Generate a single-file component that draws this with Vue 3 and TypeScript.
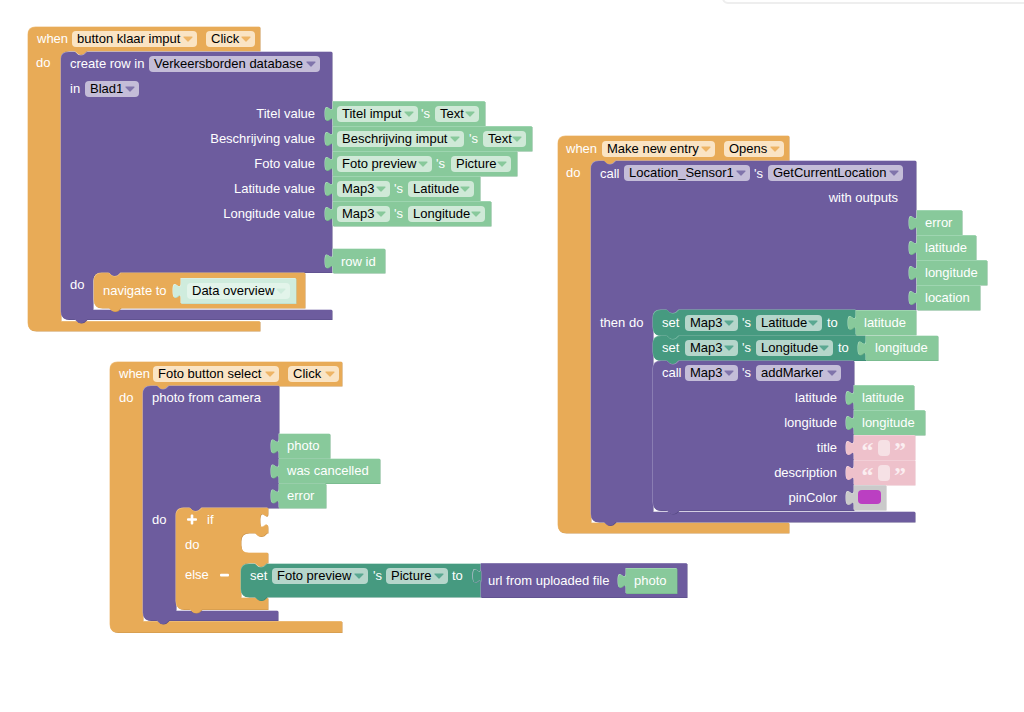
<script setup lang="ts">
type Shape = { d: string; c: 'o' | 'p' | 'g' | 't' | 'k' | 'a' | 'x' | 'u' }
type Label = { x: number; y: number; t: string; right?: boolean; big?: boolean }
type Pill = { x: number; y: number; w: number; t: string; c: string }
type Rect = { x: number; y: number; w: number; h: number; c: string }

const dent = (x: number) => `H${x} l3,2.8 q3,1.6 6,0 l3,-2.8`
const tab = (x: number) => `H${x + 12} l-3,2.8 q-3,1.6 -6,0 l-3,-2.8`
const val = (x: number, y: number, r: number, b: number, c: Shape['c']): Shape => ({
  c,
  d: `M${x},${y} H${r} V${b} H${x} V${y + 20} c0,-10 -8,8 -8,-7.5 s8,2.5 8,-7.5 Z`
})

const shapes: Shape[] = [
  // block 1
  { c: 'o', d: `M28,35 Q28,27 36,27 H260 V51 ${tab(75)} H69 Q61,51 61,59 V321.5 H260 V331 H36 Q28,331 28,323 Z` },
  { c: 'p', d: `M61,59 Q61,52 69,52 ${dent(75)} H332 V272.5 ${tab(109)} H101 Q93,272.5 93,280.5 V310 H332 V319.5 ${tab(75)} H69 Q61,319.5 61,311.5 Z` },
  { c: 'o', d: `M94,281 Q94,273 102,273 ${dent(109)} H305 V308 ${tab(109)} H102 Q94,308 94,300 Z` },
  val(181, 278.5, 296, 303.5, 'a'),
  val(333, 101.5, 485, 126, 'g'),
  val(333, 126.5, 532, 151, 'g'),
  val(333, 151.5, 517, 176, 'g'),
  val(333, 176.5, 480, 201, 'g'),
  val(333, 201.5, 491, 226, 'g'),
  val(333, 249, 385, 273, 'g'),
  // block 2
  { c: 'o', d: `M110,370 Q110,362 118,362 H342 V386 ${tab(157)} H151 Q143,386 143,394 V621.5 H342 V632.5 H118 Q110,632.5 110,624.5 Z` },
  { c: 'p', d: `M143,394 Q143,386 151,386 ${dent(157)} H279 V508 ${tab(190)} H184 Q176,508 176,516 V611 H278 V620.5 ${tab(157)} H151 Q143,620.5 143,612.5 Z` },
  { c: 'o', d: `M176,516 Q176,508 184,508 ${dent(190)} H268 V513 c0,10 -8,-8 -8,7.5 s8,-2.5 8,7.5 V533 ${tab(255)} H249 Q241,533 241,541 V545 Q241,553 249,553 H268 V563 ${tab(255)} H249 Q241,563 241,571 V598 H268 V609.5 ${tab(190)} H184 Q176,609.5 176,601.5 Z` },
  { c: 't', d: `M241,572 Q241,564 249,564 ${dent(255)} H481 V597 ${tab(255)} H249 Q241,597 241,589 Z` },
  val(481, 563.5, 687, 597.5, 'p'),
  { c: 'u', d: 'M481,583.5 c0,-10 -8,8 -8,-7.5 s8,2.5 8,-7.5 Z' },
  val(626, 568.5, 677, 593.5, 'g'),
  val(279, 434, 330, 458.5, 'g'),
  val(279, 459, 380, 483.5, 'g'),
  val(279, 484, 326, 508, 'g'),
  // block 3
  { c: 'o', d: `M558,144 Q558,136 566,136 H789 V161 ${tab(604)} H599 Q591,161 591,169 V523 H789 V533 H566 Q558,533 558,525 Z` },
  { c: 'p', d: `M591,169 Q591,161 599,161 ${dent(604)} H916 V310 ${tab(667)} H661 Q653,310 653,318 V512 H915 V522 ${tab(604)} H599 Q591,522 591,514 Z` },
  { c: 't', d: `M653,318 Q653,310 661,310 ${dent(667)} H856 V335.5 ${tab(667)} H661 Q653,335.5 653,327.5 Z` },
  { c: 't', d: `M653,344 Q653,336 661,336 ${dent(667)} H866 V360.5 ${tab(667)} H661 Q653,360.5 653,352.5 Z` },
  { c: 'p', d: `M653,369 Q653,361 661,361 ${dent(667)} H854 V510.5 ${tab(667)} H661 Q653,510.5 653,502.5 Z` },
  val(917, 210.5, 962, 235, 'g'),
  val(917, 235.5, 976, 260, 'g'),
  val(917, 260.5, 987, 285, 'g'),
  val(917, 285.5, 980, 310, 'g'),
  val(856, 310.5, 916, 335, 'g'),
  val(866, 336, 938, 360.5, 'g'),
  val(854, 385.5, 914, 410, 'g'),
  val(854, 410.5, 925, 435, 'g'),
  val(854, 435.5, 915, 460, 'x'),
  val(854, 460.5, 915, 485, 'x'),
  val(854, 485.5, 886, 510, 'k')
]

const layers = ['d', 'l', 'm'] as const

const labels: Label[] = [
  { x: 37, y: 39, t: 'when' }, { x: 36, y: 63, t: 'do' }, { x: 70, y: 64, t: 'create row in' }, { x: 70, y: 89, t: 'in' },
  { x: 315, y: 114, t: 'Titel value', right: true }, { x: 315, y: 139, t: 'Beschrijving value', right: true },
  { x: 315, y: 164, t: 'Foto value', right: true }, { x: 315, y: 189, t: 'Latitude value', right: true },
  { x: 315, y: 214, t: 'Longitude value', right: true },
  { x: 70, y: 285, t: 'do' }, { x: 103, y: 291, t: 'navigate to' },
  { x: 421, y: 114, t: "'s" }, { x: 469, y: 139, t: "'s" }, { x: 436, y: 164, t: "'s" }, { x: 394, y: 189, t: "'s" }, { x: 394, y: 214, t: "'s" },
  { x: 341, y: 262, t: 'row id' },
  { x: 119, y: 374, t: 'when' }, { x: 119, y: 398, t: 'do' }, { x: 152, y: 398, t: 'photo from camera' },
  { x: 287, y: 446, t: 'photo' }, { x: 287, y: 471, t: 'was cancelled' }, { x: 287, y: 496, t: 'error' },
  { x: 152, y: 520, t: 'do' }, { x: 207, y: 520, t: 'if' }, { x: 185, y: 545, t: 'do' }, { x: 185, y: 575, t: 'else' },
  { x: 250, y: 576, t: 'set' }, { x: 373, y: 576, t: "'s" }, { x: 452, y: 576, t: 'to' },
  { x: 488, y: 581, t: 'url from uploaded file' }, { x: 634, y: 581, t: 'photo' },
  { x: 566, y: 149, t: 'when' }, { x: 566, y: 173, t: 'do' }, { x: 600, y: 174, t: 'call' }, { x: 754, y: 174, t: "'s" },
  { x: 898, y: 198, t: 'with outputs', right: true },
  { x: 925, y: 223, t: 'error' }, { x: 925, y: 248, t: 'latitude' }, { x: 925, y: 273, t: 'longitude' }, { x: 925, y: 298, t: 'location' },
  { x: 600, y: 323, t: 'then do' }, { x: 662, y: 323, t: 'set' }, { x: 742, y: 323, t: "'s" }, { x: 827, y: 323, t: 'to' },
  { x: 864, y: 323, t: 'latitude' }, { x: 662, y: 348, t: 'set' }, { x: 742, y: 348, t: "'s" }, { x: 838, y: 348, t: 'to' },
  { x: 875, y: 348, t: 'longitude' }, { x: 662, y: 373, t: 'call' }, { x: 742, y: 373, t: "'s" },
  { x: 837, y: 398, t: 'latitude', right: true }, { x: 837, y: 423, t: 'longitude', right: true },
  { x: 837, y: 448, t: 'title', right: true }, { x: 837, y: 473, t: 'description', right: true }, { x: 837, y: 498, t: 'pinColor', right: true },
  { x: 862, y: 398, t: 'latitude' }, { x: 862, y: 423, t: 'longitude' }
]

const quotes: Label[] = [
  { x: 861.5, y: 449.5, t: '“' }, { x: 894, y: 449.5, t: '”' }, { x: 861.5, y: 474.5, t: '“' }, { x: 894, y: 474.5, t: '”' }
]

const pills: Pill[] = [
  { x: 72, y: 31, w: 125, t: 'button klaar imput', c: 'o' }, { x: 206, y: 31, w: 49, t: 'Click', c: 'o' },
  { x: 149, y: 56, w: 171, t: 'Verkeersborden database', c: 'p' }, { x: 85, y: 81, w: 54, t: 'Blad1', c: 'p' },
  { x: 187, y: 283, w: 103, t: 'Data overview', c: 'a' },
  { x: 337, y: 106, w: 81, t: 'Titel imput', c: 'g' }, { x: 435, y: 106, w: 44, t: 'Text', c: 'g' },
  { x: 337, y: 131, w: 127, t: 'Beschrijving imput', c: 'g' }, { x: 483, y: 131, w: 43, t: 'Text', c: 'g' },
  { x: 337, y: 156, w: 95, t: 'Foto preview', c: 'g' }, { x: 451, y: 156, w: 60, t: 'Picture', c: 'g' },
  { x: 337, y: 181, w: 53, t: 'Map3', c: 'g' }, { x: 408, y: 181, w: 66, t: 'Latitude', c: 'g' },
  { x: 337, y: 206, w: 53, t: 'Map3', c: 'g' }, { x: 408, y: 206, w: 77, t: 'Longitude', c: 'g' },
  { x: 153, y: 366, w: 126, t: 'Foto button select', c: 'o' }, { x: 288, y: 366, w: 51, t: 'Click', c: 'o' },
  { x: 272, y: 568, w: 96, t: 'Foto preview', c: 't' }, { x: 386, y: 568, w: 62, t: 'Picture', c: 't' },
  { x: 602, y: 141, w: 113, t: 'Make new entry', c: 'o' }, { x: 724, y: 141, w: 60, t: 'Opens', c: 'o' },
  { x: 624, y: 165, w: 126, t: 'Location_Sensor1', c: 'p' }, { x: 768, y: 165, w: 135, t: 'GetCurrentLocation', c: 'p' },
  { x: 685, y: 315, w: 53, t: 'Map3', c: 't' }, { x: 756, y: 315, w: 66, t: 'Latitude', c: 't' },
  { x: 685, y: 340, w: 53, t: 'Map3', c: 't' }, { x: 756, y: 340, w: 77, t: 'Longitude', c: 't' },
  { x: 685, y: 365, w: 53, t: 'Map3', c: 'p' }, { x: 756, y: 365, w: 85, t: 'addMarker', c: 'p' }
]

const rects: Rect[] = [
  { x: 878, y: 440, w: 12, h: 16, c: 'blank' }, { x: 878, y: 465, w: 12, h: 16, c: 'blank' },
  { x: 858, y: 490, w: 23, h: 14, c: 'swatch' }
]

const at = (x: number, y: number) => ({ left: `${x}px`, top: `${y}px` })
const labelPos = (l: Label) =>
  l.right ? { right: `${1024 - l.x}px`, top: `${l.y - 8}px` } : at(l.x, l.y - 8)
const pillPos = (p: Pill) => ({ ...at(p.x, p.y), width: `${p.w}px` })
const rectPos = (r: Rect) => ({ ...at(r.x, r.y), width: `${r.w}px`, height: `${r.h}px` })
</script>

<template>
  <div class="canvas">
    <div class="frame"></div>
    <svg class="blocks" width="1024" height="712" viewBox="0 0 1024 712">
      <g v-for="(s, i) in shapes" :key="i" :class="`b-${s.c}`">
        <path v-for="l in layers" :key="l" :d="s.d" :class="l" />
      </g>
      <rect x="187" y="518.2" width="10" height="2.6" rx="1" fill="#fff" />
      <rect x="190.7" y="514.5" width="2.6" height="10" rx="1" fill="#fff" />
      <rect x="220" y="573.8" width="9" height="2.6" rx="1" fill="#fff" />
    </svg>
    <span v-for="(l, i) in labels" :key="`l${i}`" class="label" :style="labelPos(l)">{{ l.t }}</span>
    <span v-for="(q, i) in quotes" :key="`q${i}`" class="quote" :style="at(q.x, q.y - 8)">{{ q.t }}</span>
    <div v-for="(p, i) in pills" :key="`p${i}`" class="pill" :class="`pill-${p.c}`" :style="pillPos(p)">
      <span>{{ p.t }}</span>
      <svg class="caret" width="10" height="6" viewBox="0 0 10 6"><path d="M1,1 H9 L5,5 Z" stroke-width="1.2" stroke-linejoin="round" /></svg>
    </div>
    <div v-for="(r, i) in rects" :key="`r${i}`" :class="r.c" :style="rectPos(r)"></div>
  </div>
</template>

<style scoped>
.canvas {
  position: relative;
  width: 1024px;
  height: 712px;
  overflow: hidden;
  background: #fff;
  font-family: "Liberation Sans", Arial, sans-serif;
  font-size: 13px;
}
.frame {
  position: absolute;
  left: 722px;
  top: -12px;
  width: 320px;
  height: 12px;
  border: 2px solid #eeeeee;
  border-radius: 6px;
}
.blocks { position: absolute; left: 0; top: 0; }
.d { transform: translate(0.5px, 0.5px); }
.l { transform: translate(-0.5px, -0.5px); }
.b-o .m { fill: #e8ab57; } .b-o .d { fill: #c9924a; } .b-o .l { fill: #f1c88f; }
.b-p .m { fill: #6d5c9e; } .b-p .d { fill: #574a84; } .b-p .l { fill: #a79dc7; }
.b-g .m { fill: #88c99b; } .b-g .d { fill: #6fae84; } .b-g .l { fill: #b5e0c4; }
.b-t .m { fill: #469a80; } .b-t .d { fill: #3a8570; } .b-t .l { fill: #86c2ad; }
.b-a .m { fill: #cfecdd; } .b-a .d { fill: #b3d8c4; } .b-a .l { fill: #e4f5ec; }
.b-x .m { fill: #eec1cb; } .b-x .d { fill: #e8b9c4; } .b-x .l { fill: #f6dde3; }
.b-k .m { fill: #cacaca; } .b-k .d { fill: #bcbcbc; } .b-k .l { fill: #dedede; }
.b-u .m { fill: #469a80; } .b-u .d { fill: #8fa9b0; } .b-u .l { fill: #b9cbcd; }
.label {
  position: absolute;
  height: 16px;
  line-height: 16px;
  color: #fff;
  white-space: nowrap;
}
.quote {
  position: absolute;
  height: 16px;
  line-height: 16px;
  color: #fbeef1;
  font-family: "Liberation Serif", serif;
  font-weight: 700;
  font-size: 24px;
}
.pill {
  position: absolute;
  display: flex;
  align-items: center;
  justify-content: space-between;
  height: 16px;
  line-height: 16px;
  padding: 0 4px 0 5px;
  box-sizing: border-box;
  border-radius: 4px;
  color: #000;
  white-space: nowrap;
}
.caret { flex: none; }
.pill-o { background: #fae4c4; } .pill-o .caret path { fill: #eeb566; stroke: #eeb566; }
.pill-p { background: #c4bdd8; } .pill-p .caret path { fill: #8074ab; stroke: #8074ab; }
.pill-g { background: #cfe9d7; } .pill-g .caret path { fill: #88c99b; stroke: #88c99b; }
.pill-t { background: #b5d6cb; } .pill-t .caret path { fill: #5ba892; stroke: #5ba892; }
.pill-a { background: #e2f4ea; } .pill-a .caret path { fill: #cfecdd; stroke: #cfecdd; }
.blank { position: absolute; background: #f6e1e5; border-radius: 4px; }
.swatch { position: absolute; background: #bb3fc2; border-radius: 4px; }
</style>
<style>
html, body { margin: 0; background: #fff; }
</style>
